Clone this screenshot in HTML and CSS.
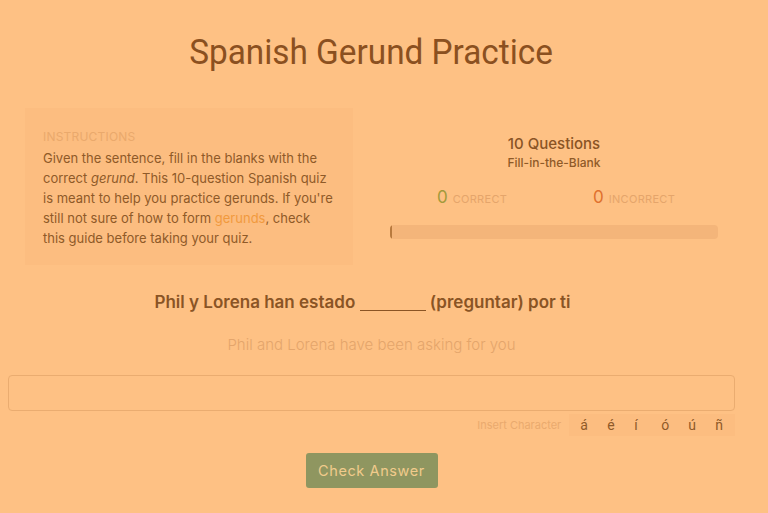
FILE: index.html
```html
<!DOCTYPE html>
<html>
<head>
<meta charset="utf-8">
<link rel="stylesheet" href="styles.css">
</head>
<body>
<main class="page">
<header class="title-wrap"><h1 class="title">Spanish Gerund Practice</h1></header>
<section class="top">
  <div class="instructions">
    <div class="label">INSTRUCTIONS</div>
    <p class="desc">Given the sentence, fill in the blanks with the correct <em>gerund</em>. This 10-question Spanish quiz is meant to help you practice gerunds. If you're still not sure of how to form <a class="link">gerunds</a>, check this guide before taking your quiz.</p>
  </div>
  <div class="stats">
    <div class="count">10 Questions</div>
    <div class="type">Fill-in-the-Blank</div>
    <div class="scores">
      <div class="score"><span class="num ok">0</span><span class="lbl">CORRECT</span></div>
      <div class="score"><span class="num bad">0</span><span class="lbl">INCORRECT</span></div>
    </div>
    <div class="bar"><div class="fill"></div></div>
  </div>
</section>
<section class="question">
  <div class="sentence">Phil y Lorena han estado <span class="blank"></span> (preguntar) por ti</div>
  <div class="translation">Phil and Lorena have been asking for you</div>
</section>
<section class="answer">
  <div class="input"></div>
  <div class="chars-row">
    <span class="insert">Insert Character</span>
    <div class="chars"><span>á</span><span>é</span><span>í</span><span>ó</span><span>ú</span><span>ñ</span></div>
  </div>
  <div class="btn-row"><button class="check">Check Answer</button></div>
</section>
</main>
</body>
</html>
```
FILE: styles.css
```css
html, body { margin: 0; padding: 0; }
body {
  background: #fec184;
  font-family: Inter, "Noto Sans", sans-serif;
  color: #8a5424;
  height: 513px;
  overflow: hidden;
}
.page { width: 743px; }
.title-wrap { display: flex; justify-content: center; padding-top: 31px; height: 79px; box-sizing: border-box; }
.title {
  margin: 0;
  font-family: Roboto, sans-serif;
  font-weight: 400;
  font-size: 35px;
  line-height: 44px;
  color: #8b5020;
  transform: scaleX(0.952);
  white-space: nowrap;
}
.top {
  display: grid;
  grid-template-columns: 328px 328px;
  column-gap: 37px;
  justify-content: center;
  margin-top: 29px;
}
.instructions {
  background: #fcbd80;
  padding: 21px 18px 20px 18px;
  height: 157px;
  box-sizing: border-box;
}
.label { font-size: 12px; line-height: 15px; color: #eaa96c; letter-spacing: 0.2px; }
.desc { margin: 4px 0 0; font-size: 13px; line-height: 20px; color: #8f5a28; }
.desc em { font-style: italic; }
.link { color: #f19a3e; }
.stats { display: flex; flex-direction: column; align-items: center; padding-top: 27px; }
.count { font-size: 15px; font-weight: 500; line-height: 18px; color: #8a5424; }
.type { font-size: 12px; font-weight: 500; line-height: 16px; margin-top: 2px; color: #8f5a28; }
.scores { display: flex; width: 100%; justify-content: space-around; margin-top: 16px; padding-left: 4px; box-sizing: border-box; }
.score { display: flex; align-items: baseline; gap: 5px; }
.num { font-size: 17px; line-height: 20px; }
.ok { color: #a39a3b; }
.bad { color: #e0712e; }
.lbl { font-size: 11px; color: #e5a56b; letter-spacing: 0.3px; }
.bar { width: 328px; height: 14px; margin-top: 18px; background: #f4b57a; border-radius: 4px; overflow: hidden; }
.fill { width: 2px; height: 100%; background: #b87a3e; }
.question { display: flex; flex-direction: column; align-items: center; margin-top: 26px; }
.sentence { font-size: 17px; font-weight: 600; line-height: 22px; color: #8a5424; margin-right: 18px; }
.blank { display: inline-block; width: 66px; border-bottom: 1px solid #8a5424; vertical-align: -3px; height: 16px; }
.translation { margin-top: 22px; font-size: 15px; font-weight: 300; color: #e4a56b; line-height: 19px; }
.answer { margin-top: 21px; padding: 0 8px; }
.input { height: 36px; border: 1px solid #eaac70; border-radius: 4px; box-sizing: border-box; }
.chars-row { display: flex; justify-content: flex-end; align-items: center; gap: 8px; margin-top: 3px; }
.insert { font-size: 11px; color: #eaaa6e; }
.chars { display: flex; background: #fcbd80; height: 22px; align-items: center; padding: 0 12px 0 11px; }
.chars span { width: 27px; font-size: 14px; color: #8f5a28; font-family: Roboto, sans-serif; }
.chars span:last-child { width: auto; }
.btn-row { display: flex; justify-content: center; margin-top: 17px; }
.check {
  background: #8f9660;
  color: #f1cb8c;
  border: none;
  border-radius: 3px;
  width: 132px;
  height: 35px;
  font-family: Inter, sans-serif;
  font-size: 14.5px;
  letter-spacing: 0.6px;
}
```
